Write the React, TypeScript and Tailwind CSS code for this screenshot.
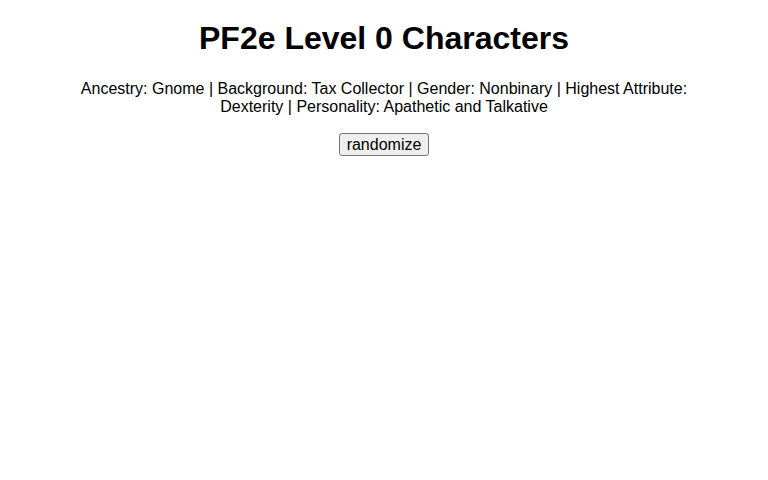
import React, { useState } from 'react'

const ancestries = ['Gnome', 'Dwarf', 'Elf', 'Goblin', 'Halfling', 'Human', 'Leshy', 'Orc']
const backgrounds = ['Tax Collector', 'Farmhand', 'Acolyte', 'Criminal', 'Merchant', 'Scholar']
const genders = ['Nonbinary', 'Female', 'Male']
const attributes = ['Dexterity', 'Strength', 'Constitution', 'Intelligence', 'Wisdom', 'Charisma']
const traits = ['Apathetic', 'Talkative', 'Brave', 'Curious', 'Grumpy', 'Cheerful']

const pick = (list: string[]) => list[Math.floor(Math.random() * list.length)]

const App = () => {
  const [character, setCharacter] = useState({
    ancestry: 'Gnome',
    background: 'Tax Collector',
    gender: 'Nonbinary',
    attribute: 'Dexterity',
    personality: 'Apathetic and Talkative',
  })

  const randomize = () => {
    setCharacter({
      ancestry: pick(ancestries),
      background: pick(backgrounds),
      gender: pick(genders),
      attribute: pick(attributes),
      personality: `${pick(traits)} and ${pick(traits)}`,
    })
  }

  return (
    <div className="min-h-[480px] bg-white text-black font-['Liberation_Sans',Arial,sans-serif] text-center">
      <h1 className="pt-[20px] text-[32px] leading-[37px] font-bold">PF2e Level 0 Characters</h1>
      <p className="mx-auto mt-[23px] max-w-[640px] text-[16px] leading-[18px]">
        Ancestry: {character.ancestry} | Background: {character.background} | Gender: {character.gender} | Highest Attribute: {character.attribute} | Personality: {character.personality}
      </p>
      <button
        onClick={randomize}
        className="mt-[17px] h-[23px] px-[7px] text-[16px] leading-[18px] bg-[#efefef] border border-[#767676] rounded-[3px] hover:bg-[#e5e5e5]"
      >
        randomize
      </button>
    </div>
  )
}

export default App
